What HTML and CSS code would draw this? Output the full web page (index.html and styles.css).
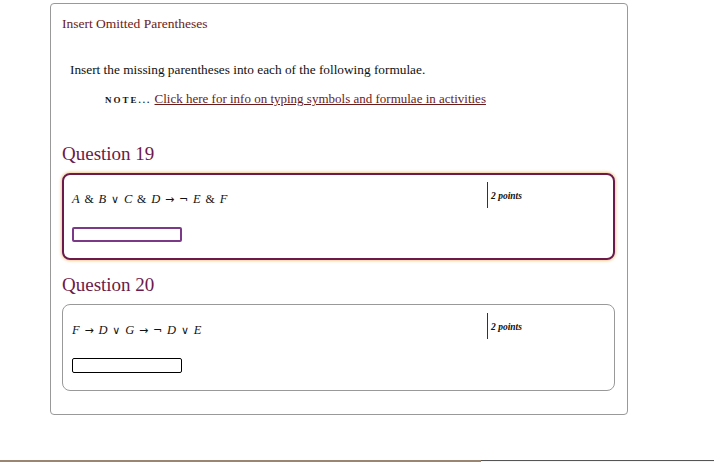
FILE: index.html
```html
<!DOCTYPE html>
<html lang="en">
<head>
    <meta charset="UTF-8">
    <title>Insert Omitted Parentheses</title>
    <link rel="stylesheet" href="styles.css">
</head>
<body>
    <div class="page">
        <div class="panel">
            <h1 class="title">Insert Omitted Parentheses</h1>
            <p class="intro">Insert the missing parentheses into each of the following formulae.</p>
            <p class="note"><span class="noteLabel">NOTE...</span> <a href="">Click here for info on typing symbols and formulae in activities</a></p>

            <h2 class="qTitle">Question 19</h2>
            <div class="question active">
                <div class="qRow">
                    <p class="formula"><i>A</i> &amp; <i>B</i> <span class="op">&or;</span> <i>C</i> &amp; <i>D</i> <span class="op">&rarr;</span> <span class="op">&not;</span> <i>E</i> &amp; <i>F</i></p>
                    <div class="points">2 points</div>
                </div>
                <input class="answer focused" type="text">
            </div>

            <h2 class="qTitle">Question 20</h2>
            <div class="question">
                <div class="qRow">
                    <p class="formula"><i>F</i> <span class="op">&rarr;</span> <i>D</i> <span class="op">&or;</span> <i>G</i> <span class="op">&rarr;</span> <span class="op">&not;</span> <i>D</i> <span class="op">&or;</span> <i>E</i></p>
                    <div class="points">2 points</div>
                </div>
                <input class="answer" type="text">
            </div>
        </div>
    </div>
    <div class="progress">
        <div class="progressDone"></div>
    </div>
</body>
</html>
```
FILE: styles.css
```css
html, body{
    margin: 0;
    background-color: white;
    font-family: "Liberation Serif", "DejaVu Serif", serif;
    color: #111;
}

.page{
    height: 460px;
    padding: 3px 0 0 50px;
    box-sizing: border-box;
}

.panel{
    width: 578px;
    height: 412px;
    box-sizing: border-box;
    border: 1px solid #999;
    border-radius: 4px;
    padding: 12px 12px 0 11px;
}

.title{
    margin: 0;
    font-size: 13.5px;
    font-weight: normal;
    color: #6b1a1a;
}

.intro{
    margin: 30px 0 0 8px;
    font-size: 13.3px;
}

.note{
    margin: 13px 0 0 43px;
    font-size: 13px;
}

.noteLabel{
    font-size: 9px;
    letter-spacing: 2px;
    font-weight: bold;
}

.note a{
    color: #6b1a1a;
}

.qTitle{
    margin: 36px 0 0 0;
    font-size: 19px;
    font-weight: normal;
    color: #6b1a4a;
}

.question{
    margin-top: 8px;
    height: 87px;
    box-sizing: border-box;
    border: 1px solid #999;
    border-radius: 8px;
    padding: 8px 9px;
}

.question.active{
    border: 2px solid #6b1a4a;
    box-shadow: 0 0 3px 1px #f0c890;
    padding: 7px 8px;
}

.question + .qTitle{
    margin-top: 14px;
}

.qRow{
    display: flex;
    justify-content: space-between;
}

.formula{
    margin: 10px 0 0 0;
    height: 16px;
    font-family: "Liberation Serif", serif;
    font-size: 12px;
    word-spacing: 1.8px;
}

.formula i{
    font-style: italic;
    font-size: 12.5px;
}

.op{
    font-family: "DejaVu Sans", sans-serif;
    font-size: 11px;
}

.points{
    width: 118px;
    height: 26px;
    border-left: 1px solid #333;
    padding: 9px 0 0 3px;
    box-sizing: border-box;
    font-size: 9.5px;
    font-style: italic;
    font-weight: bold;
}

.answer{
    display: block;
    margin-top: 19px;
    width: 110px;
    height: 15px;
    box-sizing: border-box;
    border: 1px solid black;
    border-radius: 2px;
    padding: 0;
}

.answer.focused{
    border: 2px solid #7a3a88;
}

.progress{
    height: 2px;
    background-color: #f4f4f4;
    border-top: 1px solid #555;
}

.progressDone{
    width: 481px;
    height: 3px;
    margin-top: -1px;
    background-color: #9a8570;
}
```
